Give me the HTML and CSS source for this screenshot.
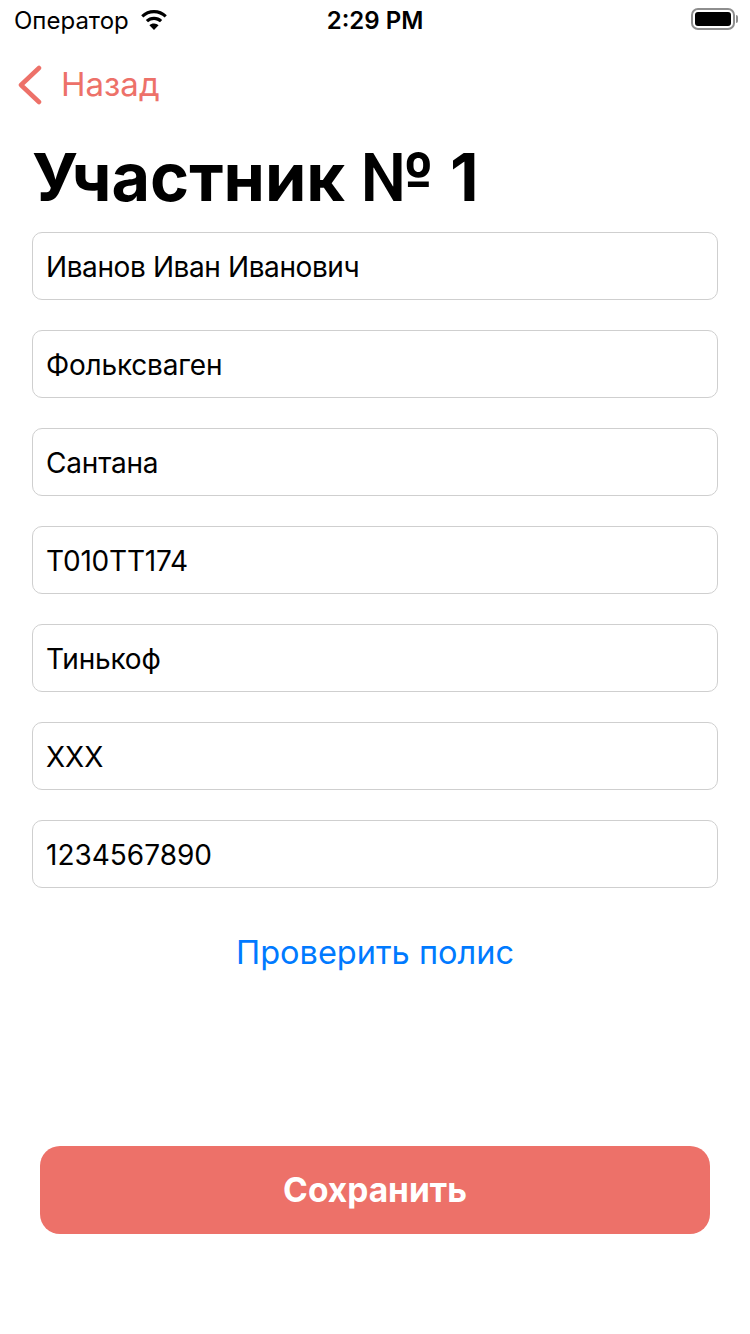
FILE: index.html
```html
<!DOCTYPE html>
<html lang="ru">
<head>
<meta charset="utf-8">
<title>Участник № 1</title>
<link rel="stylesheet" href="styles.css">
</head>
<body>
<div class="screen">
  <header class="status">
    <div class="status-left">
      <span class="carrier">Оператор</span>
      <svg class="wifi" viewBox="0 0 30 22" aria-hidden="true">
        <path d="M15 4.200c4.100 0 7.900 1.600 10.700 4.300l2.100-2.200A18.500 18.500 0 0 0 15 1 18.500 18.500 0 0 0 2.200 6.300l2.100 2.200A15.400 15.400 0 0 1 15 4.200z"/>
        <path d="M15 10.900c2.300 0 4.400.9 6 2.400l2.200-2.200A11.800 11.800 0 0 0 15 7.800c-3.200 0-6.100 1.200-8.200 3.300L9 13.300a8.700 8.700 0 0 1 6-2.400z"/>
        <path d="M15 14.500c-1.900 0-3.500.7-4.600 1.700L15 21l4.600-4.800A6.700 6.700 0 0 0 15 14.500z"/>
      </svg>
    </div>
    <span class="time">2:29 PM</span>
    <div class="battery"><span class="battery-body"><span class="battery-fill"></span></span><span class="battery-cap"></span></div>
  </header>
  <nav class="nav">
    <svg class="chevron" viewBox="0 0 26 40" aria-hidden="true"><path d="M22 3 4 20l18 17"/></svg>
    <span>Назад</span>
  </nav>
  <h1 class="title">Участник № 1</h1>
  <form class="fields">
    <div class="field field-tight">Иванов Иван Иванович</div>
    <div class="field">Фольксваген</div>
    <div class="field">Сантана</div>
    <div class="field">Т010ТТ174</div>
    <div class="field">Тинькоф</div>
    <div class="field field-wide">ХХХ</div>
    <div class="field field-wide">1234567890</div>
  </form>
  <a class="link">Проверить полис</a>
  <button class="save" type="button">Сохранить</button>
</div>
</body>
</html>
```
FILE: styles.css
```css
* { box-sizing: border-box; }
html, body { margin: 0; padding: 0; background: #fff; }
body { font-family: Inter, "Liberation Sans", sans-serif; color: #000; }
.screen { width: 750px; height: 1334px; display: flex; flex-direction: column; overflow: hidden; }
.status { position: relative; height: 40px; display: flex; align-items: center; justify-content: space-between; padding: 0 12px 0 14px; font-size: 24px; }
.status-left { display: flex; align-items: center; gap: 10px; }
.carrier { font-size: 24px; }
.wifi { width: 30px; height: 22px; fill: #000; margin-top: -1px; }
.time { position: absolute; left: 0; right: 0; text-align: center; font-size: 24px; font-weight: 600; pointer-events: none; }
.battery { display: flex; align-items: center; gap: 1px; margin-top: -2px; }
.battery-body { width: 44px; height: 22px; border: 2px solid #8e8e8e; border-radius: 7px; padding: 2px; display: block; }
.battery-fill { display: block; height: 100%; background: #000; border-radius: 3px; }
.battery-cap { width: 2px; height: 8px; background: #8e8e8e; border-radius: 0 2px 2px 0; }
.nav { height: 90px; display: flex; align-items: center; padding: 0 0 0 17px; gap: 18px; color: #ed7169; font-size: 33px; }
.nav span { margin-top: -2px; }
.chevron { width: 26px; height: 40px; fill: none; stroke: #ed7169; stroke-width: 4.500px; stroke-linecap: round; stroke-linejoin: round; }
.title { margin: 11px 0 0 32px; height: 91px; font-size: 66.500px; line-height: 72px; font-weight: 700; }
.fields { display: flex; flex-direction: column; gap: 30px; padding: 0 32px; }
.field { height: 68px; border: 1px solid #cfcfcf; border-radius: 10px; display: flex; align-items: center; padding: 2px 13px 0; font-size: 28px; letter-spacing: -0.2px; }
.field-tight { letter-spacing: -0.4px; }
.field-wide { letter-spacing: 0; }
.link { margin-top: 45px; text-align: center; color: #007aff; font-size: 32.500px; line-height: 40px; }
.save { margin: 173px 40px 0; height: 88px; border: 0; border-radius: 20px; background: #ed7169; color: #fff; font: 700 33.500px Inter, "Liberation Sans", sans-serif; }
```
